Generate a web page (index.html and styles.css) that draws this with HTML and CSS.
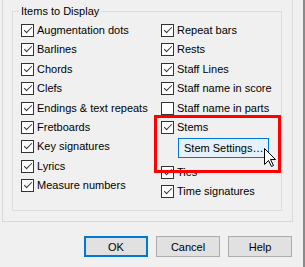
FILE: index.html
```html
<!DOCTYPE html>
<html lang="en">
<head>
    <meta charset="UTF-8">
    <title>Display Options</title>
    <link rel="stylesheet" href="styles.css">
</head>
<body>
    <div class="window">
        <div class="content">
            <!-- Tab page -->
            <div class="page">
                <fieldset class="group">
                    <legend>Items to Display</legend>
                    <div class="columns">
                        <div class="col col-left">
                            <label class="check"><span class="box on"></span>Augmentation dots</label>
                            <label class="check"><span class="box on"></span>Barlines</label>
                            <label class="check"><span class="box on"></span>Chords</label>
                            <label class="check"><span class="box on"></span>Clefs</label>
                            <label class="check"><span class="box on"></span>Endings &amp; text repeats</label>
                            <label class="check"><span class="box on"></span>Fretboards</label>
                            <label class="check"><span class="box on"></span>Key signatures</label>
                            <label class="check"><span class="box on"></span>Lyrics</label>
                            <label class="check"><span class="box on"></span>Measure numbers</label>
                        </div>
                        <div class="col">
                            <label class="check"><span class="box on"></span>Repeat bars</label>
                            <label class="check"><span class="box on"></span>Rests</label>
                            <label class="check"><span class="box on"></span>Staff Lines</label>
                            <label class="check"><span class="box on"></span>Staff name in score</label>
                            <label class="check"><span class="box"></span>Staff name in parts</label>
                            <label class="check stems"><span class="box on"></span>Stems</label>
                            <div class="sub-btn">Stem Settings…</div>
                            <label class="check"><span class="box on"></span>Ties</label>
                            <label class="check"><span class="box on"></span>Time signatures</label>
                        </div>
                    </div>
                </fieldset>

                <!-- annotation + mouse pointer -->
                <div class="highlight"></div>
                <svg class="pointer" width="13" height="20" viewBox="0 0 13 20">
                    <path d="M0.5 0.5V16.5L4.5 12.5L7.5 18.5L9.5 17.5L6.5 11.5H11.5Z" fill="#fff" stroke="#000" stroke-width="1" stroke-linejoin="miter"/>
                </svg>
            </div>

            <div class="actions">
                <button class="btn btn-default">OK</button>
                <button class="btn">Cancel</button>
                <button class="btn">Help</button>
            </div>
        </div>
        <div class="edge"></div>
    </div>
</body>
</html>
```

FILE: styles.css
```css
html, body {
    margin: 0;
    background-color: #f0f0f0;
}
body {
    font-family: "Liberation Sans", Arial, sans-serif;
    font-size: 11px;
    color: #000;
}
.window {
    display: flex;
    height: 267px;
}
.content {
    flex: 1;
}
.edge {
    width: 2px;
    background-color: #8a8a8a;
}
.page {
    position: relative;
    margin-left: 2px;
    width: 291px;
    height: 222px;
    box-sizing: border-box;
    padding-top: 4px;
    border: 1px solid #d9d9d9;
    border-top: none;
}
.group {
    margin: 0 0 0 9px;
    width: 270px;
    height: 207px;
    box-sizing: border-box;
    padding: 6px 8px 0;
    border: 1px solid #dcdcdc;
    min-width: 0;
}
.group legend {
    margin-left: -2px;
    padding: 0 2px;
    line-height: 14px;
}
.columns {
    display: flex;
}
.col {
    display: flex;
    flex-direction: column;
}
.col-left {
    width: 140px;
}
.check {
    display: flex;
    align-items: center;
    height: 13px;
    line-height: 13px;
    margin-bottom: 6.4px;
    white-space: nowrap;
}
.check.stems {
    margin-bottom: 4px;
}
.box {
    flex: none;
    position: relative;
    width: 13px;
    height: 13px;
    box-sizing: border-box;
    margin-right: 3px;
    border: 1px solid #333;
    background-color: #fff;
}
.box.on::after {
    content: "";
    position: absolute;
    left: 3.5px;
    top: 0;
    width: 3px;
    height: 7px;
    border-right: 1.2px solid #333;
    border-bottom: 1.2px solid #333;
    transform: rotate(45deg);
}
.sub-btn {
    margin: 0 0 8px 17px;
    width: 91px;
    height: 20px;
    box-sizing: border-box;
    padding-left: 5px;
    display: flex;
    align-items: center;
    border: 1px solid #0078d7;
    background-color: #e5f1fb;
}
.highlight {
    position: absolute;
    left: 151px;
    top: 115px;
    width: 127px;
    height: 58px;
    box-sizing: border-box;
    border: 3px solid #ff0000;
}
.pointer {
    position: absolute;
    left: 261px;
    top: 148px;
}
.actions {
    display: flex;
    justify-content: flex-end;
    gap: 8px;
    padding: 14px 11px 0 0;
}
.btn {
    width: 64px;
    height: 21px;
    box-sizing: border-box;
    padding: 0;
    font-family: inherit;
    font-size: 11px;
    color: #000;
    background-color: #e1e1e1;
    border: 1px solid #adadad;
    border-radius: 0;
}
.btn-default {
    border: 2px solid #0078d7;
}
```
